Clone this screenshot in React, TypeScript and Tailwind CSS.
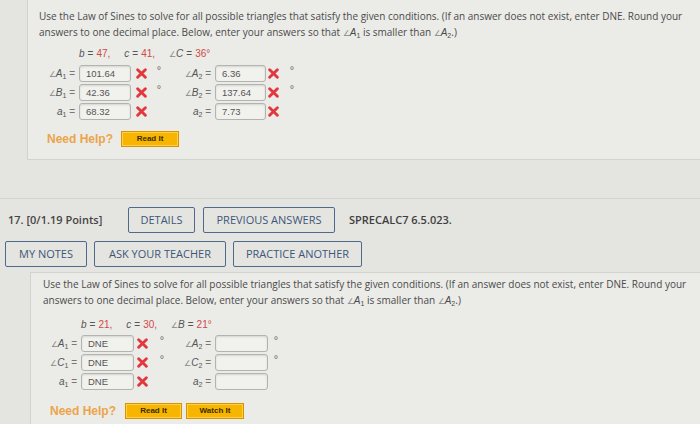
import type { ReactNode } from 'react';

const body = { fontFamily: '"Open Sans", "Liberation Sans", sans-serif' };
const math = { fontFamily: '"Liberation Sans", Arial, sans-serif' };

function XMark() {
  return (
    <svg width="11" height="11" viewBox="0 0 10 10">
      <path d="M1.5 1.5 L8.5 8.5 M8.5 1.5 L1.5 8.5" stroke="#e2373d" strokeWidth="2.6" strokeLinecap="round" />
    </svg>
  );
}

function Deg() {
  return <span className="relative -top-[3px] text-[11px] text-[#666]" style={math}>°</span>;
}

function Label({ a, v, sub, w }: { a?: boolean; v: string; sub: string; w: string }) {
  return (
    <div className={`${w} shrink-0 pr-[4px] text-right text-[10px] text-[#555]`} style={math}>
      {a && <span className="text-[8px] text-[#888]">∠</span>}
      <i>{v}</i>
      <sub className="text-[7px]">{sub}</sub> <span className="text-[#777]">=</span>
    </div>
  );
}

function Box({ value, w }: { value?: string; w: string }) {
  return (
    <div
      className={`${w} h-[17px] shrink-0 rounded-[3px] border border-[#b3b3b0] bg-[#f1f1ee] pl-[6px] text-[9.5px] leading-[15px] text-[#555] shadow-[inset_0_1px_2px_rgba(0,0,0,0.12)]`}
      style={math}
    >
      {value}
    </div>
  );
}

function Cell({ w, children }: { w: string; children?: ReactNode }) {
  return <div className={`${w} flex shrink-0 items-center justify-center`}>{children}</div>;
}

function OrangeBtn({ text, w }: { text: string; w: string }) {
  return (
    <div
      className={`${w} flex h-[16px] items-center justify-center border border-[#d99300] bg-[#f7b500] text-[8px] font-bold text-[#3b2c00] shadow-[inset_0_0_0_1px_#fcd24a]`}
      style={math}
    >
      {text}
    </div>
  );
}

function OutlineBtn({ text, w }: { text: string; w: string }) {
  return (
    <div
      className={`${w} flex h-[26px] items-center justify-center rounded-[2px] border-[1.5px] border-[#50698a] text-[11px] text-[#3d5778]`}
      style={body}
    >
      {text}
    </div>
  );
}

function Intro() {
  return (
    <p className="text-[10px] leading-[16px] text-[#4a4a4a]" style={body}>
      Use the Law of Sines to solve for all possible triangles that satisfy the given conditions. (If an answer does not exist, enter DNE. Round your
      <br />
      answers to one decimal place. Below, enter your answers so that <span style={math}><span className="text-[8px] text-[#888]">∠</span><i>A</i><sub className="text-[7px]">1</sub></span> is smaller than <span style={math}><span className="text-[8px] text-[#888]">∠</span><i>A</i><sub className="text-[7px]">2</sub></span>.)
    </p>
  );
}

function Given({ items }: { items: [string, string, boolean][] }) {
  return (
    <div className="flex h-[16px] items-center gap-[14px] text-[10px] text-[#555]" style={math}>
      {items.map(([k, v, ang], i) => (
        <span key={i}>
          {ang && <span className="text-[8px] text-[#888]">∠</span>}
          <i>{k}</i>
          <span className="mx-[3px]">=</span>
          <span className="text-[#cf4a44]">{v}</span>
        </span>
      ))}
    </div>
  );
}

const rows1: [string, boolean, string, string, string][] = [
  ['A', true, '1', '101.64', '6.36'],
  ['B', true, '1', '42.36', '137.64'],
  ['a', false, '1', '68.32', '7.73'],
];

const rows2: [string, boolean, string][] = [
  ['A', true, 'DNE'],
  ['C', true, 'DNE'],
  ['a', false, 'DNE'],
];

export default function App() {
  return (
    <div className="h-[424px] w-[700px] overflow-hidden bg-[#e4e4e0]">
      <div className="ml-[27px] h-[160px] border-b border-l border-[#d2d2ce] bg-[#ebebe8] pl-[11px] pt-[8px]">
        <Intro />
        <div className="mt-[3px] pl-[40px]">
          <Given items={[['b', '47,', false], ['c', '41,', false], ['C', '36°', true]]} />
        </div>
        <div className="mt-[3px] -ml-[11px]">
          {rows1.map(([v, a, s, l, r], i) => (
            <div key={i} className="flex h-[19px] items-center">
              <Label a={a} v={v} sub={s} w="w-[51px]" />
              <Box value={l} w="w-[52px]" />
              <Cell w="w-[20px]"><XMark /></Cell>
              <Cell w="w-[16px]">{i < 2 && <Deg />}</Cell>
              <Label a={a} v={v} sub="2" w="w-[48px]" />
              <Box value={r} w="w-[51px]" />
              <Cell w="w-[14px]"><XMark /></Cell>
              <Cell w="w-[24px]">{i < 2 && <Deg />}</Cell>
            </div>
          ))}
        </div>
        <div className="mt-[9px] flex items-center pl-[8px]">
          <span className="text-[12px] font-bold text-[#eba548]" style={math}>Need Help?</span>
          <div className="ml-[8px]"><OrangeBtn text="Read It" w="w-[58px]" /></div>
        </div>
      </div>

      <div className="mt-[38px] border-t border-[#d2d2ce] pt-[8px]">
        <div className="flex items-center">
          <span className="ml-[8px] w-[120px] text-[11px] font-semibold text-[#444]" style={body}>17. [0/1.19 Points]</span>
          <OutlineBtn text="DETAILS" w="w-[67px]" />
          <div className="ml-[8px]"><OutlineBtn text="PREVIOUS ANSWERS" w="w-[132px]" /></div>
          <span className="ml-[14px] text-[11px] font-semibold text-[#3f3f3f]" style={body}>SPRECALC7 6.5.023.</span>
        </div>
        <div className="mt-[8px] flex items-center gap-[7px] pl-[5px]">
          <OutlineBtn text="MY NOTES" w="w-[82px]" />
          <OutlineBtn text="ASK YOUR TEACHER" w="w-[132px]" />
          <OutlineBtn text="PRACTICE ANOTHER" w="w-[129px]" />
        </div>
      </div>

      <div className="mt-[5px] ml-[30px] h-[160px] border-l border-t border-[#d2d2ce] bg-[#ebebe8] pl-[12px] pt-[3px]">
        <Intro />
        <div className="mt-[6px] pl-[38px]">
          <Given items={[['b', '21,', false], ['c', '30,', false], ['B', '21°', true]]} />
        </div>
        <div className="mt-[2px] -ml-[12px]">
          {rows2.map(([v, a, l], i) => (
            <div key={i} className="flex h-[19px] items-center">
              <Label a={a} v={v} sub="1" w="w-[50px]" />
              <Box value={l} w="w-[53px]" />
              <Cell w="w-[16px]"><XMark /></Cell>
              <Cell w="w-[24px]">{i < 2 && <Deg />}</Cell>
              <Label a={a} v={v} sub="2" w="w-[41px]" />
              <Box w="w-[53px]" />
              <Cell w="w-[16px]">{i < 2 && <Deg />}</Cell>
            </div>
          ))}
        </div>
        <div className="mt-[11px] flex items-center pl-[7px]">
          <span className="text-[12px] font-bold text-[#eba548]" style={math}>Need Help?</span>
          <div className="ml-[9px]"><OrangeBtn text="Read It" w="w-[57px]" /></div>
          <div className="ml-[4px]"><OrangeBtn text="Watch It" w="w-[58px]" /></div>
        </div>
      </div>
    </div>
  );
}
